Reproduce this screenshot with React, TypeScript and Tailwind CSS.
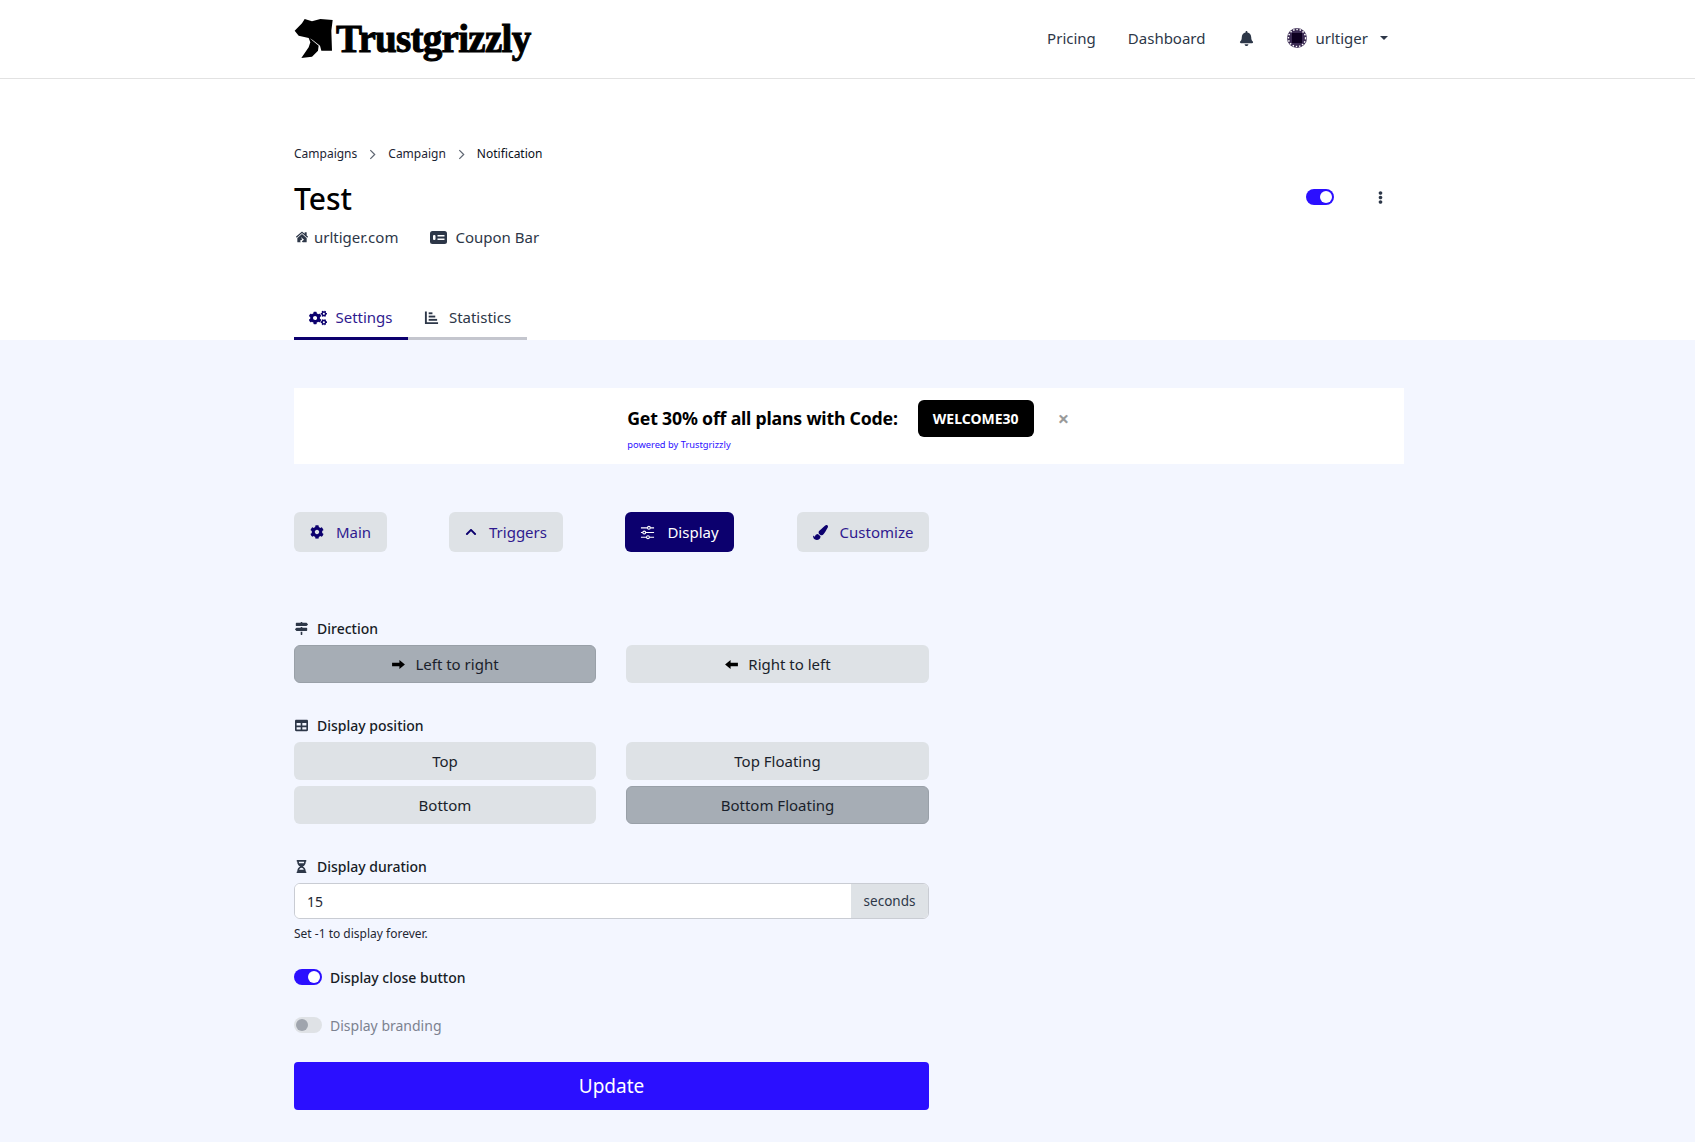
import React from "react";
import { FaBell, FaCogs, FaCog, FaChevronUp, FaPaintBrush, FaMapSigns, FaTable, FaHourglassHalf, FaEllipsisV, FaHouseDamage } from "react-icons/fa";

const Bear = () => (
  <svg viewBox="6 12 120 123" className="w-[40px] h-[41px] shrink-0" fill="#000">
    <path d="M8 50 L30 28 L38 15 L60 22 L85 15 L122 18 L118 50 L120 110 L88 110 L84 95 L62 78 L52 72 L80 95 L78 110 L60 128 L28 132 L50 100 L55 85 L50 72 L20 65 Z" />
  </svg>
);

const Avatar = () => (
  <svg viewBox="0 0 20 20" className="w-5 h-5">
    <circle cx="10" cy="10" r="10" fill="#3a2a52" />
    <circle cx="10" cy="10" r="8.6" fill="none" stroke="#ffffff" strokeWidth="1.5" strokeDasharray="1.5 1.8" />
    <rect x="5" y="5" width="10" height="10" fill="#0d0020" />
  </svg>
);

const Arrow = ({ left }: { left?: boolean }) => (
  <svg viewBox="0 0 16 12" className={`w-[15px] h-[11px] ${left ? "-scale-x-100" : ""}`} fill="#000">
    <path d="M1 4h8V1l6 5-6 5V8H1z" />
  </svg>
);

const Sliders = () => (
  <svg viewBox="0 0 16 16" className="w-[15px] h-[15px]" fill="none" stroke="#fff" strokeWidth="1.2">
    <path d="M1 3h7M11 3h4M1 8h2M6 8h9M1 13h6M10 13h5" />
    <circle cx="9.5" cy="3" r="1.5" /><circle cx="4.5" cy="8" r="1.5" /><circle cx="8.5" cy="13" r="1.5" />
  </svg>
);

const Chevron = () => (
  <svg viewBox="0 0 8 12" className="w-[7px] h-[11px] mx-[12px]" fill="none" stroke="#5f6672" strokeWidth="1.4"><path d="M1.5 1l5 5-5 5" /></svg>
);

const Switch = ({ muted }: { muted?: boolean }) =>
  muted ? (
    <span className="w-7 h-4 rounded-full bg-[#dfe2e6] flex items-center pl-[2px] shrink-0">
      <span className="w-3 h-3 rounded-full bg-[#a0a5ae]" />
    </span>
  ) : (
    <span className="w-7 h-4 rounded-full bg-[#2b0fff] flex items-center justify-end pr-[2px] shrink-0">
      <span className="w-3 h-3 rounded-full bg-white" />
    </span>
  );

const Tab = ({ icon, label, active, cls }: { icon: React.ReactNode; label: string; active?: boolean; cls: string }) => (
  <div className={`h-10 rounded-md flex items-center justify-center gap-3 text-[15px] ${active ? "bg-[#0c006e] text-white" : "bg-[#dee2e6] text-[#2f1a8f]"} ${cls}`}>
    {icon}
    <span>{label}</span>
  </div>
);

const Opt = ({ children, on }: { children: React.ReactNode; on?: boolean }) => (
  <div className={`h-[38px] rounded-md flex items-center justify-center gap-[9px] text-[15px] text-[#1a1f2b] ${on ? "bg-[#a6adb5] border border-[#99a0a8]" : "bg-[#dee2e6]"}`}>
    {children}
  </div>
);

const Label = ({ icon, children }: { icon: React.ReactNode; children: React.ReactNode }) => (
  <div className="flex items-center h-[21px] mb-[6px] text-[14px] font-medium text-[#171c26]">
    <span className="w-[15px] flex justify-center text-[#2d3748] mr-2">{icon}</span>
    {children}
  </div>
);

export default function App() {
  return (
    <div className="min-h-[1142px] bg-white text-[#2d3748]" style={{ fontFamily: '"Noto Sans", sans-serif' }}>
      <header className="h-[79px] border-b border-[#e2e2e2] pl-[294px] pr-[307px] pb-[2px] flex items-center justify-between">
        <div className="flex items-center">
          <Bear />
          <span className="text-[39px] leading-none font-bold text-black ml-[2px] tracking-[-0.7px] [-webkit-text-stroke:1px_black]" style={{ fontFamily: '"Liberation Serif", serif' }}>Trustgrizzly</span>
        </div>
        <nav className="flex items-center text-[15px]">
          <span>Pricing</span>
          <span className="ml-8">Dashboard</span>
          <FaBell className="ml-[34px] text-[15px]" />
          <span className="ml-[33px]"><Avatar /></span>
          <span className="ml-2">urltiger</span>
          <span className="ml-3 w-0 h-0 border-x-[4px] border-x-transparent border-t-[4px] border-t-[#2d3748]" />
        </nav>
      </header>

      <section className="pl-[294px] pr-[305px] pt-[65px] h-[261px] flex flex-col">
        <div className="flex items-center text-[12px] h-[20px] text-[#1c2433]">
          <span>Campaigns</span>
          <Chevron />
          <span>Campaign</span>
          <Chevron />
          <span className="text-[#0a0f1a]">Notification</span>
        </div>
        <div className="flex items-start justify-between mt-[16px]">
          <h1 className="text-[30px] leading-[38px] font-medium text-black">Test</h1>
          <div className="flex items-center h-[34px]">
            <Switch />
            <FaEllipsisV className="ml-[40px] mr-[3px] text-[13px]" />
          </div>
        </div>
        <div className="flex items-center text-[15px] mt-[8px] h-[22px]">
          <FaHouseDamage className="text-[12px] ml-[2px] mr-[6px]" />
          <span>urltiger.com</span>
          <svg viewBox="0 0 17 13" className="w-[17px] h-[13px] ml-[32px] mr-[8px]">
            <rect x="0" y="0" width="17" height="13" rx="2.5" fill="#2d3748" />
            <rect x="7.5" y="4" width="7" height="1.5" fill="#fff" />
            <rect x="7.5" y="7.5" width="7" height="1.5" fill="#fff" />
            <rect x="3" y="4" width="2.5" height="5" rx="1" fill="#fff" />
          </svg>
          <span>Coupon Bar</span>
        </div>
        <div className="flex mt-auto">
          <div className="w-[114px] h-[46px] pt-[4px] border-b-[3px] border-[#0c006e] flex items-center justify-center gap-[8px] text-[#2f1a8f] text-[15px]">
            <FaCogs className="text-[#0c006e] text-[18px]" />
            <span>Settings</span>
          </div>
          <div className="w-[119px] h-[46px] pt-[4px] border-b-[3px] border-[#c4c6ce] flex items-center justify-center gap-[10px] text-[15px]">
            <svg viewBox="0 0 16 16" className="w-[15px] h-[15px]" fill="#2d3748"><path d="M1 1.5h2v11.5h12v2H1z" /><rect x="5" y="2.5" width="4" height="2" /><rect x="5" y="6" width="7" height="2" /><rect x="5" y="9.5" width="9" height="2" /></svg>
            <span>Statistics</span>
          </div>
        </div>
      </section>

      <main className="bg-[#f3f6ff] min-h-[802px] pl-[294px] pr-[291px] pt-[48px] pb-8">
        <div className="h-[76px] bg-white flex justify-center pt-[12px]">
          <div className="flex flex-col -ml-[3px]">
            <div className="flex items-center h-[36px]">
              <span className="text-[17.7px] font-bold text-black tracking-[-0.2px]">Get 30% off all plans with Code:</span>
              <span className="ml-5 h-[37px] w-[116px] bg-black rounded-md text-white text-[14px] font-bold flex items-center justify-center">WELCOME30</span>
              <span className="ml-6 w-[10px] text-[#9a9a9a] text-[20px] font-bold leading-none pt-[2px]">×</span>
            </div>
            <span className="text-[9.3px] text-[#2b0fff] mt-[3px] leading-[12px]">powered by Trustgrizzly</span>
          </div>
        </div>

        <div className="w-[635px] mt-[48px]">
          <div className="flex">
            <Tab cls="w-[93px]" label="Main" icon={<FaCog className="text-[#0c006e] text-[14px]" />} />
            <Tab cls="w-[114px] ml-[62px]" label="Triggers" icon={<FaChevronUp className="text-[#0c006e] text-[12px]" />} />
            <Tab cls="w-[109px] ml-[62px]" active label="Display" icon={<Sliders />} />
            <Tab cls="w-[132px] ml-[63px]" label="Customize" icon={<FaPaintBrush className="text-[#0c006e] text-[15px]" />} />
          </div>

          <div className="mt-[66px]">
            <Label icon={<FaMapSigns className="text-[13px]" />}>Direction</Label>
            <div className="grid grid-cols-[302px_303px] gap-x-[30px]">
              <Opt on><Arrow />Left to right</Opt>
              <Opt><Arrow left />Right to left</Opt>
            </div>
          </div>

          <div className="mt-[32px]">
            <Label icon={<FaTable className="text-[13px]" />}>Display position</Label>
            <div className="grid grid-cols-[302px_303px] gap-x-[30px] gap-y-[6px]">
              <Opt>Top</Opt>
              <Opt>Top Floating</Opt>
              <Opt>Bottom</Opt>
              <Opt on>Bottom Floating</Opt>
            </div>
          </div>

          <div className="mt-[32px]">
            <Label icon={<FaHourglassHalf className="text-[13px]" />}>Display duration</Label>
            <div className="flex h-[36px] border border-[#c9ccd3] rounded-md overflow-hidden bg-white">
              <input readOnly value="15" className="flex-1 min-w-0 px-3 text-[14px] text-[#1f2733] outline-none bg-white" />
              <span className="w-[77px] bg-[#dee2e6] flex items-center justify-center text-[13.5px] text-[#2d3748]">seconds</span>
            </div>
            <p className="text-[12px] mt-[6px] leading-[18px] text-[#1f2733]">Set -1 to display forever.</p>
          </div>

          <div className="flex items-center gap-2 mt-[24px] h-[20px] text-[14px] font-medium text-[#171c26]">
            <Switch />
            Display close button
          </div>
          <div className="flex items-center gap-2 mt-[28px] h-[20px] text-[14px] text-[#7c8290]">
            <Switch muted />
            Display branding
          </div>

          <div className="mt-[27px] h-[48px] bg-[#2b0fff] rounded-[4px] flex items-center justify-center text-white text-[19px] pt-[1px]">Update</div>
        </div>
      </main>
    </div>
  );
}
